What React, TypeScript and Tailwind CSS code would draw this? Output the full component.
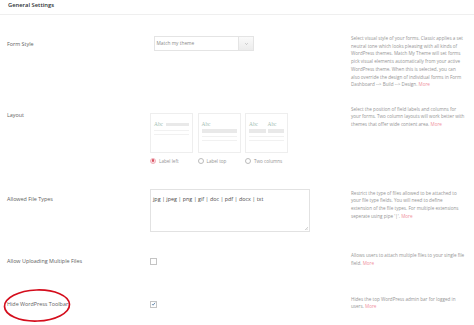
const More = () => <span className="text-[#f0909d]">More</span>;

function Desc({ lines }: { lines: React.ReactNode[] }) {
  return (
    <div className="text-[4.6px] leading-[7.7px] text-[#959595] whitespace-nowrap">
      {lines.map((l, i) => (
        <div key={i}>{l}</div>
      ))}
    </div>
  );
}

function Label({ children }: { children: React.ReactNode }) {
  return (
    <div className="text-[5.4px] leading-[8px] text-[#616161] whitespace-nowrap">
      {children}
    </div>
  );
}

function Card({ kind }: { kind: "left" | "top" | "two" }) {
  const abc = "block font-['Liberation_Serif',serif] text-[5.4px] leading-[5px] text-[#a3c0b4]";
  return (
    <div className="w-[43px] h-[40px] border border-[#eeeeee] bg-white px-[3px] pt-[8px] text-[5px] leading-[5px]">
      {kind === "left" && (
        <div className="flex items-center gap-[3px]">
          <div className={abc}>Abc</div>
          <div className="flex-1 h-[3px] bg-[#e9e9e9]" />
        </div>
      )}
      {kind === "top" && (
        <div>
          <div className={abc}>Abc</div>
          <div className="mt-[2px] h-[4px] bg-[#e9e9e9]" />
        </div>
      )}
      {kind === "two" && (
        <div className="flex gap-[2px]">
          <div className="flex-1">
            <div className={abc}>Abc</div>
            <div className="mt-[2px] h-[4px] bg-[#e9e9e9]" />
          </div>
          <div className="flex-1">
            <div className={abc}>Abc</div>
            <div className="mt-[2px] h-[4px] bg-[#e9e9e9]" />
          </div>
        </div>
      )}
      <div className="mt-[3px] h-px bg-[#f1f1f1]" />
      <div className="mt-[3px] h-px bg-[#f1f1f1]" />
    </div>
  );
}

function Radio({ checked, label }: { checked?: boolean; label: string }) {
  return (
    <div className="flex items-center gap-[3px] mt-[5px]">
      <span
        className={
          "w-[6px] h-[6px] rounded-full border flex items-center justify-center " +
          (checked ? "border-[#f0b3bd] bg-[#fbdde2]" : "border-[#bbbbbb] bg-white")
        }
      >
        {checked && <span className="w-[2.5px] h-[2.5px] rounded-full bg-[#d9505f]" />}
      </span>
      <span className="text-[4.6px] leading-[6px] text-[#959595] whitespace-nowrap">{label}</span>
    </div>
  );
}

function Checkbox({ checked }: { checked?: boolean }) {
  return (
    <div className="w-[7px] h-[7px] border border-[#c4c4c4] bg-white flex items-center justify-center">
      {checked && (
        <svg viewBox="0 0 10 10" className="w-[6px] h-[6px]">
          <path d="M2 5.2 L4.2 7.4 L8.2 2.4" fill="none" stroke="#2d5d8f" strokeWidth="1.4" />
        </svg>
      )}
    </div>
  );
}

export default function App() {
  return (
    <div className="w-[474px] h-[325px] bg-white overflow-hidden font-['Open_Sans',sans-serif]">
      <div className="h-[15px] border-b border-[#efefef] pl-[8px] pt-[0.5px]">
        <h1 className="text-[5.8px] leading-[8px] font-semibold text-[#2b2f33]">General Settings</h1>
      </div>

      <div className="grid grid-cols-[150px_201px_1fr] h-[90px] pt-[20px]">
        <div className="pl-[7px] mt-[4.7px]">
          <Label>Form Style</Label>
        </div>
        <div className="mt-[1px]">
          <div className="ml-[4px] w-[100px] h-[15px] border border-[#e4e4e4] flex">
            <div className="flex-1 flex items-center pl-[1.5px] text-[4.8px] text-[#8a8a8a]">
              Match my theme
            </div>
            <div className="w-[15px] border-l border-[#e4e4e4] bg-gradient-to-b from-[#fafafa] to-[#ececec] flex items-center justify-center">
              <svg viewBox="0 0 6 4" className="w-[3px] h-[2px]">
                <path d="M0.5 0.5 L3 3 L5.5 0.5" fill="none" stroke="#999" strokeWidth="1" />
              </svg>
            </div>
          </div>
        </div>
        <Desc
          lines={[
            "Select visual style of your forms. Classic applies a set",
            "neutral tone which looks pleasing with all kinds of",
            "WordPress themes. Match My Theme will set forms",
            "pick visual elements automatically from your active",
            "WordPress theme. When this is selected, you can",
            "also override the design of individual forms in Form",
            <>
              Dashboard --&gt; Build --&gt; Design. <More />
            </>,
          ]}
        />
      </div>

      <div className="grid grid-cols-[150px_201px_1fr] h-[83px] pt-[0.5px]">
        <div className="pl-[7px] mt-[5.5px]">
          <Label>Layout</Label>
        </div>
        <div className="mt-[7px] flex gap-[4.5px]">
          <div>
            <Card kind="left" />
            <Radio checked label="Label left" />
          </div>
          <div>
            <Card kind="top" />
            <Radio label="Label top" />
          </div>
          <div>
            <Card kind="two" />
            <Radio label="Two columns" />
          </div>
        </div>
        <Desc
          lines={[
            "Select the position of field labels and columns for",
            "your forms. Two column layouts will work better with",
            <>
              themes that offer wide content area. <More />
            </>,
          ]}
        />
      </div>

      <div className="grid grid-cols-[150px_201px_1fr] h-[63px]">
        <div className="pl-[7px] mt-[6.7px]">
          <Label>Allowed File Types</Label>
        </div>
        <div className="mt-[0.5px]">
          <div className="relative w-[160px] h-[43.5px] border border-[#e2e2e2] pl-[2px] pt-[6px] text-[5.4px] leading-[7px] text-[#4a4a4a]">
            jpg | jpeg | png | gif | doc | pdf | docx | txt
            <svg viewBox="0 0 4 4" className="absolute right-[1px] bottom-[1px] w-[3px] h-[3px]">
              <path d="M4 0 L0 4 M4 2 L2 4" stroke="#aaa" strokeWidth="0.7" />
            </svg>
          </div>
        </div>
        <div className="mt-[1.6px]">
          <Desc
            lines={[
              "Restrict the type of files allowed to be attached to",
              "your file type fields. You will need to define",
              "extension of the file types. For multiple extensions",
              <>
                seperate using pipe '|'. <More />
              </>,
            ]}
          />
        </div>
      </div>

      <div className="grid grid-cols-[150px_201px_1fr] h-[44px]">
        <div className="pl-[7px] mt-[5.7px]">
          <Label>Allow Uploading Multiple Files</Label>
        </div>
        <div className="mt-[6.5px]">
          <Checkbox />
        </div>
        <div className="mt-[0.8px]">
          <Desc
            lines={[
              "Allows users to attach multiple files to your single file",
              <>
                field. <More />
              </>,
            ]}
          />
        </div>
      </div>

      <div className="relative grid grid-cols-[150px_201px_1fr] h-[30px]">
        <div className="pl-[7px] mt-[5.3px]">
          <Label>Hide WordPress Toolbar</Label>
        </div>
        <div className="mt-[5.7px]">
          <Checkbox checked />
        </div>
        <div className="mt-[0.5px]">
          <Desc
            lines={[
              "Hides the top WordPress admin bar for logged in",
              <>
                users. <More />
              </>,
            ]}
          />
        </div>
        <svg
          viewBox="0 0 68 35"
          className="absolute left-[3px] top-[-7px] w-[68px] h-[35px] pointer-events-none"
        >
          <ellipse cx="34" cy="17.5" rx="32.5" ry="15.5" fill="none" stroke="#d40d1c" strokeWidth="1.7" transform="rotate(-2 34 17.5)" />
        </svg>
      </div>
    </div>
  );
}
